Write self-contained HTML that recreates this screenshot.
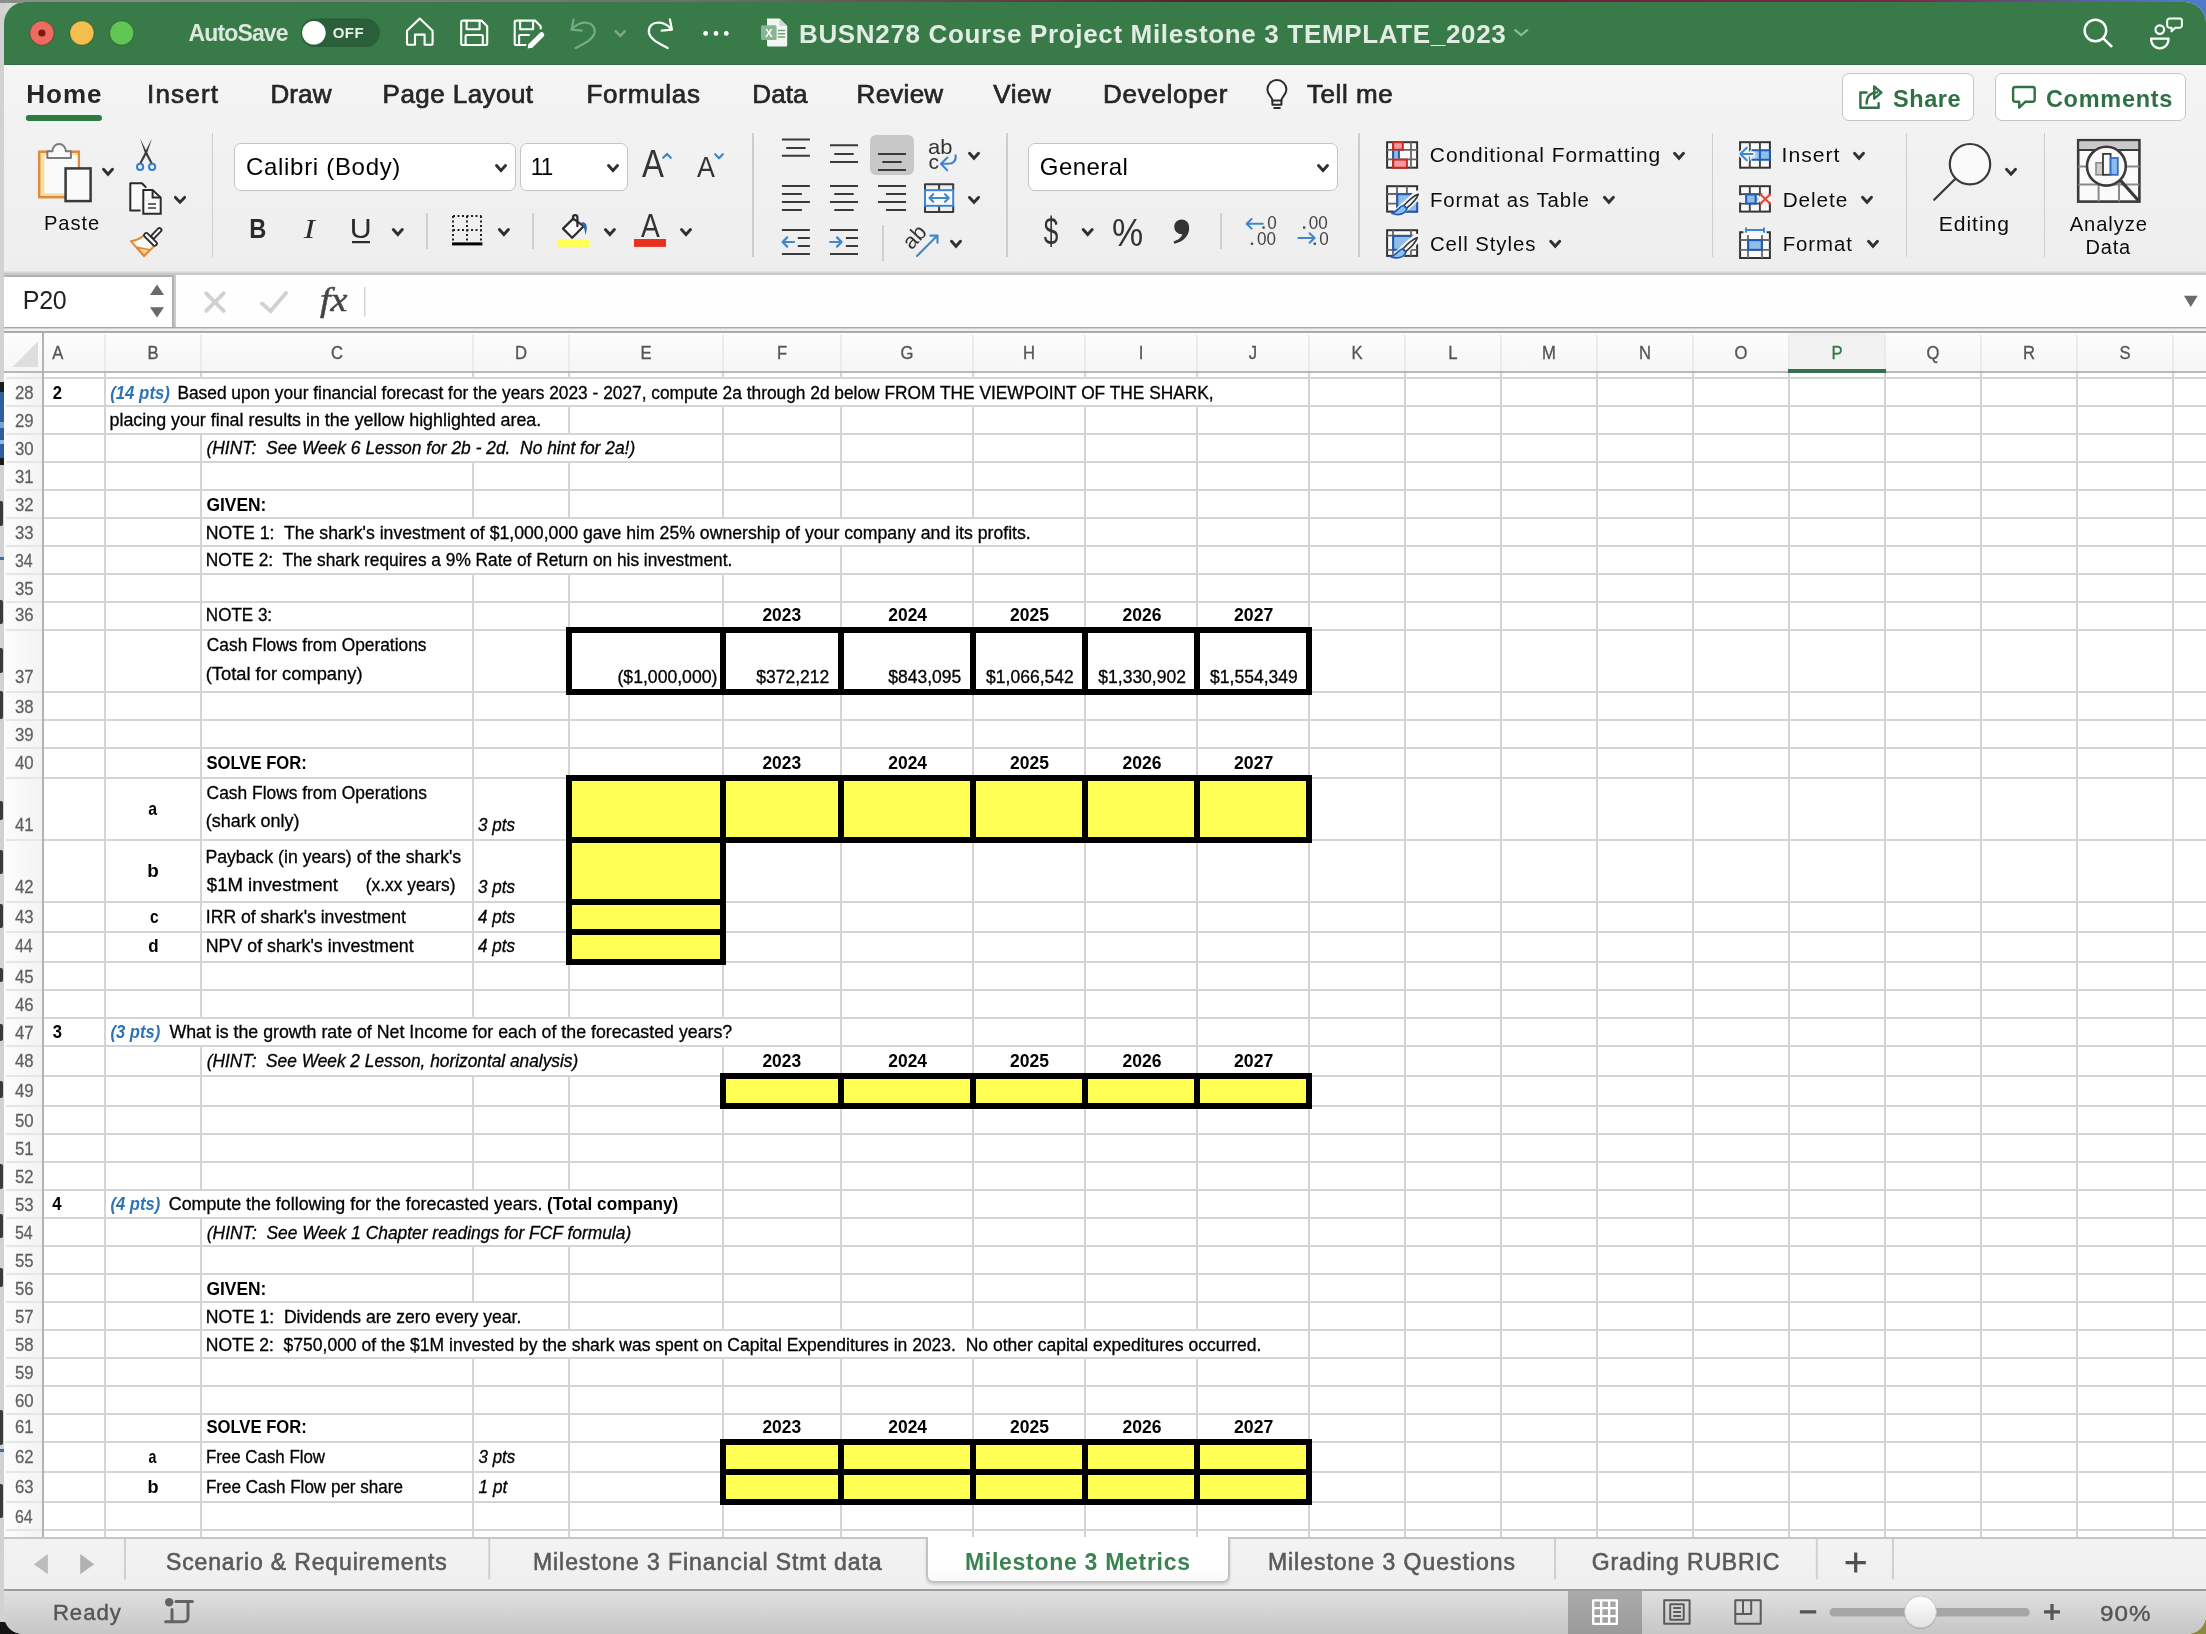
<!DOCTYPE html><html><head><meta charset="utf-8"><title>BUSN278 Course Project Milestone 3 TEMPLATE_2023</title>
<style>
html,body{margin:0;padding:0}
body{width:2206px;height:1634px;position:relative;overflow:hidden;background:#d6d6d6;font-family:"Liberation Sans",sans-serif}
.a{position:absolute}
#win{position:absolute;left:4px;top:2px;width:2202px;height:1632px;border-radius:21px 21px 19px 19px;overflow:hidden;background:#fff}
svg{position:absolute;left:0;top:0;will-change:transform}
text{white-space:pre}
</style></head><body>
<div class="a" style="left:0;top:0;width:2206px;height:3px;background:linear-gradient(90deg,#8a8f8c 0,#6b6f6e 700px,#5a2030 1200px,#7a2848 1900px,#4f79c9 2180px)"></div>
<div class="a" style="left:0;top:3px;width:6px;height:1631px;background:#d2d2d2"></div>
<div class="a" style="left:0;top:382px;width:5px;height:83px;background:linear-gradient(#1c1c1c 0,#1c1c1c 10px,#2c5f9c 10px,#2c5f9c 40px,#7fa3cf 40px,#7fa3cf 46px,#2c5f9c 46px,#2c5f9c 58px,#9ab6da 58px,#9ab6da 62px,#2c5f9c 62px,#2c5f9c 76px,#1c1c1c 76px)"></div>
<div class="a" style="left:0;top:557px;width:5px;height:3px;background:#3a6db0"></div>
<div class="a" style="left:0;top:1449px;width:5px;height:3px;background:#3a6db0"></div>
<div class="a" style="left:0;top:501px;width:3px;height:25px;background:#3a3a3a;border-radius:0 2px 2px 0"></div>
<div class="a" style="left:0;top:600px;width:3px;height:24px;background:#3a3a3a;border-radius:0 2px 2px 0"></div>
<div class="a" style="left:0;top:648px;width:3px;height:25px;background:#3a3a3a;border-radius:0 2px 2px 0"></div>
<div class="a" style="left:0;top:691px;width:3px;height:28px;background:#3a3a3a;border-radius:0 2px 2px 0"></div>
<div class="a" style="left:0;top:801px;width:3px;height:19px;background:#3a3a3a;border-radius:0 2px 2px 0"></div>
<div class="a" style="left:0;top:850px;width:3px;height:24px;background:#3a3a3a;border-radius:0 2px 2px 0"></div>
<div class="a" style="left:0;top:904px;width:3px;height:24px;background:#3a3a3a;border-radius:0 2px 2px 0"></div>
<div class="a" style="left:0;top:968px;width:3px;height:14px;background:#3a3a3a;border-radius:0 2px 2px 0"></div>
<div class="a" style="left:0;top:1024px;width:3px;height:17px;background:#3a3a3a;border-radius:0 2px 2px 0"></div>
<div class="a" style="left:0;top:1081px;width:3px;height:17px;background:#3a3a3a;border-radius:0 2px 2px 0"></div>
<div class="a" style="left:0;top:1164px;width:3px;height:25px;background:#3a3a3a;border-radius:0 2px 2px 0"></div>
<div class="a" style="left:0;top:1214px;width:3px;height:24px;background:#3a3a3a;border-radius:0 2px 2px 0"></div>
<div class="a" style="left:0;top:1268px;width:3px;height:19px;background:#3a3a3a;border-radius:0 2px 2px 0"></div>
<div class="a" style="left:0;top:1410px;width:3px;height:35px;background:#3a3a3a;border-radius:0 2px 2px 0"></div>
<div class="a" style="left:0;top:1484px;width:3px;height:34px;background:#3a3a3a;border-radius:0 2px 2px 0"></div>
<div class="a" style="left:0;top:1622px;width:26px;height:12px;background:#141414"></div>
<div class="a" style="left:2176px;top:1604px;width:30px;height:30px;background:#8a8a3c"></div>
<div class="a" style="left:2176px;top:0;width:30px;height:30px;background:#4f79c9"></div>
<div id="win">
<div class="a" style="left:0px;top:0px;width:2202px;height:63px;background:linear-gradient(#387b49 0,#387b49 61.5px,#2f7040 62.5px,#2f7040 63px)"></div>
<div class="a" style="left:0px;top:63px;width:2202px;height:207px;background:linear-gradient(#fff 0,#fff 1px,#f7f7f7 1.5px,#f4f4f4 12px,#f2f2f2 60px,#eeeeee 207px)"></div>
<div class="a" style="left:0px;top:269px;width:2202px;height:4px;background:linear-gradient(#eaeaea,#c9c9c9 60%,#c6c6c6)"></div>
<div class="a" style="left:0px;top:273px;width:2202px;height:52px;background:#fefefe"></div>
<div class="a" style="left:0px;top:273px;width:168px;height:50px;background:#fff;border-top:2px solid #b2b2b2;border-right:2px solid #b2b2b2;box-sizing:content-box"></div>
<div class="a" style="left:170px;top:273px;width:2px;height:52px;background:#cbcbcb"></div>
<div class="a" style="left:0px;top:325px;width:2202px;height:6px;background:linear-gradient(#a6a6a6 0,#a9a9a9 1.3px,#e4e4e4 1.6px,#fbfbfb 3px,#dcdcdc 4.2px,#ababab 4.5px,#ababab 5.7px,#e8e8e8 6px)"></div>
<div class="a" style="left:0px;top:331px;width:2202px;height:38px;background:linear-gradient(#fdfdfd,#f6f6f6)"></div>
<div class="a" style="left:1785px;top:331px;width:96px;height:38px;background:#f2f2f2"></div>
<div class="a" style="left:1784px;top:367px;width:98px;height:4px;background:#35714a"></div>
<div class="a" style="left:0px;top:369px;width:2202px;height:2px;background:#b8b8b8"></div>
<div class="a" style="left:1784px;top:367px;width:98px;height:4px;background:#35714a"></div>
<div class="a" style="left:0px;top:371px;width:39px;height:1164px;background:linear-gradient(90deg,#fdfdfd,#f3f3f3)"></div>
<div class="a" style="left:0px;top:1535px;width:2202px;height:53px;background:linear-gradient(#c6c6c6 0,#c6c6c6 2px,#f3f3f3 2px,#efefef 53px)"></div>
<div class="a" style="left:0px;top:1587px;width:2202px;height:2px;background:#9c9c9c"></div>
<div class="a" style="left:0px;top:1589px;width:2202px;height:43px;background:linear-gradient(#e0e0e0,#c6c6c6)"></div>
<div class="a" style="left:1564px;top:1589px;width:74px;height:43px;background:linear-gradient(#ababab,#9a9a9a)"></div>
<div class="a" style="left:922px;top:1535px;width:304px;height:46px;background:linear-gradient(#fff 60%,#fafafa);border:2px solid #c2c2c2;border-top:none;box-sizing:border-box;border-radius:0 0 7px 7px;box-shadow:0 2px 3px rgba(0,0,0,.12)"></div>
<div class="a" style="left:230px;top:141px;width:282px;height:48.4px;background:#fff;border:1.6px solid #c4c4c4;border-radius:7px;box-sizing:border-box"></div>
<div class="a" style="left:516px;top:141px;width:108px;height:48.4px;background:#fff;border:1.6px solid #c4c4c4;border-radius:7px;box-sizing:border-box"></div>
<div class="a" style="left:1024px;top:141px;width:310px;height:48.4px;background:#fff;border:1.6px solid #c4c4c4;border-radius:7px;box-sizing:border-box"></div>
<div class="a" style="left:1837.5px;top:71px;width:132px;height:47.5px;background:#fff;border:1.6px solid #c4c4c4;border-radius:7px;box-sizing:border-box"></div>
<div class="a" style="left:1990.5px;top:71px;width:191px;height:47.5px;background:#fff;border:1.6px solid #c4c4c4;border-radius:7px;box-sizing:border-box"></div>
<div class="a" style="left:866px;top:133px;width:44px;height:40px;background:#c8c8c8;border-radius:6px"></div>
<div class="a" style="left:207.75px;top:131px;width:1.5px;height:124px;background:#cdcdcd"></div>
<div class="a" style="left:748.25px;top:131px;width:1.5px;height:124px;background:#cdcdcd"></div>
<div class="a" style="left:1002.25px;top:131px;width:1.5px;height:124px;background:#cdcdcd"></div>
<div class="a" style="left:1354.25px;top:131px;width:1.5px;height:124px;background:#cdcdcd"></div>
<div class="a" style="left:1707.75px;top:131px;width:1.5px;height:124px;background:#cdcdcd"></div>
<div class="a" style="left:1901.75px;top:131px;width:1.5px;height:124px;background:#cdcdcd"></div>
<div class="a" style="left:2039.75px;top:131px;width:1.5px;height:124px;background:#cdcdcd"></div>
<div class="a" style="left:422.05px;top:211px;width:1.5px;height:36px;background:#d0d0d0"></div>
<div class="a" style="left:528.25px;top:211px;width:1.5px;height:36px;background:#d0d0d0"></div>
<div class="a" style="left:878.45px;top:223px;width:1.5px;height:36px;background:#d0d0d0"></div>
<div class="a" style="left:1216.25px;top:211px;width:1.5px;height:36px;background:#d0d0d0"></div>
</div>
<svg width="2206" height="1634" viewBox="0 0 2206 1634">
<path d="M105 373V1537M201 373V1537M473 373V1537M569 373V1537M723 373V1537M841 373V1537M973 373V1537M1085 373V1537M1197 373V1537M1309 373V1537M1405 373V1537M1501 373V1537M1597 373V1537M1693 373V1537M1789 373V1537M1885 373V1537M1981 373V1537M2077 373V1537M2173 373V1537M44 378H2206M44 406H2206M44 434H2206M44 462H2206M44 490H2206M44 518H2206M44 546H2206M44 574H2206M44 602H2206M44 630H2206M44 692H2206M44 720H2206M44 748H2206M44 778H2206M44 840H2206M44 902H2206M44 932H2206M44 962H2206M44 990H2206M44 1018H2206M44 1046H2206M44 1076H2206M44 1106H2206M44 1134H2206M44 1162H2206M44 1190H2206M44 1218H2206M44 1246H2206M44 1274H2206M44 1302H2206M44 1330H2206M44 1358H2206M44 1386H2206M44 1414H2206M44 1442H2206M44 1472H2206M44 1502H2206M44 1530H2206" stroke="#d4d4d4" stroke-width="2" fill="none" shape-rendering="crispEdges"/>
<path d="M6 378H42M6 406H42M6 434H42M6 462H42M6 490H42M6 518H42M6 546H42M6 574H42M6 602H42M6 630H42M6 692H42M6 720H42M6 748H42M6 778H42M6 840H42M6 902H42M6 932H42M6 962H42M6 990H42M6 1018H42M6 1046H42M6 1076H42M6 1106H42M6 1134H42M6 1162H42M6 1190H42M6 1218H42M6 1246H42M6 1274H42M6 1302H42M6 1330H42M6 1358H42M6 1386H42M6 1414H42M6 1442H42M6 1472H42M6 1502H42M6 1530H42" stroke="#e6e6e6" stroke-width="2" fill="none" shape-rendering="crispEdges"/>
<path d="M43 333V1537" stroke="#b3b3b3" stroke-width="2" shape-rendering="crispEdges"/>
<path d="M105 335V371M201 335V371M473 335V371M569 335V371M723 335V371M841 335V371M973 335V371M1085 335V371M1197 335V371M1309 335V371M1405 335V371M1501 335V371M1597 335V371M1693 335V371M1789 335V371M1885 335V371M1981 335V371M2077 335V371M2173 335V371" stroke="#ebebeb" stroke-width="2" shape-rendering="crispEdges"/>
<rect x="1788" y="369" width="98" height="4" fill="#35714a"/>
<path d="M12.5 367H38V341.5Z" fill="#dedede"/>
<rect x="106" y="379" width="1202" height="26" fill="#fff"/>
<rect x="106" y="407" width="462" height="26" fill="#fff"/>
<rect x="202" y="435" width="520" height="26" fill="#fff"/>
<rect x="202" y="519" width="882" height="26" fill="#fff"/>
<rect x="202" y="547" width="638" height="26" fill="#fff"/>
<rect x="106" y="1019" width="734" height="26" fill="#fff"/>
<rect x="202" y="1047" width="520" height="28" fill="#fff"/>
<rect x="106" y="1191" width="616" height="26" fill="#fff"/>
<rect x="202" y="1219" width="520" height="26" fill="#fff"/>
<rect x="202" y="1303" width="366" height="26" fill="#fff"/>
<rect x="202" y="1331" width="1106" height="26" fill="#fff"/>
<rect x="569" y="630" width="740" height="62" fill="#fff"/>
<path d="M569 627V695M723 627V695M841 627V695M973 627V695M1085 627V695M1197 627V695M1309 627V695M566 630H1312M566 692H1312" stroke="#000" stroke-width="6" fill="none" shape-rendering="crispEdges"/>
<rect x="569" y="778" width="740" height="62" fill="#ffff54"/>
<path d="M569 775V843M723 775V843M841 775V843M973 775V843M1085 775V843M1197 775V843M1309 775V843M566 778H1312M566 840H1312" stroke="#000" stroke-width="6" fill="none" shape-rendering="crispEdges"/>
<rect x="569" y="840" width="154" height="122" fill="#ffff54"/>
<path d="M569 837V965M723 837V965M566 840H726M566 902H726M566 932H726M566 962H726" stroke="#000" stroke-width="6" fill="none" shape-rendering="crispEdges"/>
<rect x="723" y="1076" width="586" height="30" fill="#ffff54"/>
<path d="M723 1073V1109M841 1073V1109M973 1073V1109M1085 1073V1109M1197 1073V1109M1309 1073V1109M720 1076H1312M720 1106H1312" stroke="#000" stroke-width="6" fill="none" shape-rendering="crispEdges"/>
<rect x="723" y="1442" width="586" height="60" fill="#ffff54"/>
<path d="M723 1439V1505M841 1439V1505M973 1439V1505M1085 1439V1505M1197 1439V1505M1309 1439V1505M720 1442H1312M720 1472H1312M720 1502H1312" stroke="#000" stroke-width="6" fill="none" shape-rendering="crispEdges"/>
<circle cx="41.9" cy="33" r="12" fill="#ed6b5f" stroke="rgba(0,0,0,.22)" stroke-width="1.2"/>
<circle cx="41.9" cy="33" r="3.6" fill="#7c1a10" stroke="none" stroke-width="0"/>
<circle cx="81.9" cy="33" r="12" fill="#f5bf4f" stroke="rgba(0,0,0,.22)" stroke-width="1.2"/>
<circle cx="121.7" cy="33" r="12" fill="#62c655" stroke="rgba(0,0,0,.22)" stroke-width="1.2"/>
<rect x="300.8" y="18.6" width="79.1" height="28.5" rx="14.25" fill="#2b5f3a" stroke="none" stroke-width="0" />
<circle cx="313.9" cy="32.8" r="11.8" fill="#fff" stroke="none" stroke-width="0"/>
<path d="M407 30.7L419.8 18.6L432.6 30.7V43.2a1.6 1.6 0 0 1-1.6 1.6H424.6V34.6H415V44.8H408.6a1.6 1.6 0 0 1-1.6-1.6Z" stroke="#fff" stroke-width="2.1" fill="none" stroke-linecap="round" stroke-linejoin="round" />
<path d="M461.2 22.2a1.6 1.6 0 0 1 1.6-1.6H481.5L487.2 26.3V43.4a1.6 1.6 0 0 1-1.6 1.6H462.8a1.6 1.6 0 0 1-1.6-1.6Z" stroke="#fff" stroke-width="2.1" fill="none" stroke-linecap="round" stroke-linejoin="round" />
<path d="M466.6 20.8V29.2H479.6V20.8M465.6 45V36a1 1 0 0 1 1-1H481.8a1 1 0 0 1 1 1V45" stroke="#fff" stroke-width="2.1" fill="none" stroke-linecap="round" stroke-linejoin="round" />
<path d="M527 45H516.3a1.6 1.6 0 0 1-1.6-1.6V22.2a1.6 1.6 0 0 1 1.6-1.6H535L540.7 26.3V28.5" stroke="#fff" stroke-width="2.1" fill="none" stroke-linecap="round" stroke-linejoin="round" />
<path d="M520.1 20.8V29.2H533.1V20.8M519.1 45V36a1 1 0 0 1 1-1H529" stroke="#fff" stroke-width="2.1" fill="none" stroke-linecap="round" stroke-linejoin="round" />
<path d="M530.6 45.6L542 34.2" stroke="#387c4a" stroke-width="9" stroke-linecap="round"/>
<path d="M531.2 45.2L541.6 34.8" stroke="#fff" stroke-width="5.2" stroke-linecap="round"/>
<path d="M527.6 48.4L528.6 43.6L532.6 47.4Z" fill="#fff" />
<path d="M573.6 19.4L571.6 29.6L581.8 30.6" stroke="#7aa987" stroke-width="2.2" fill="none" stroke-linecap="round" stroke-linejoin="round" />
<path d="M572.2 29.2C579 19.5 596.5 20.5 594.5 33C593.2 39.5 584 43.5 575.8 48" stroke="#7aa987" stroke-width="2.2" fill="none" stroke-linecap="round" stroke-linejoin="round" />
<path d="M615.6 31.1L620.2 35.9L624.8000000000001 31.1" stroke="#7aa987" stroke-width="2.4" fill="none" stroke-linecap="round" stroke-linejoin="miter"/>
<path d="M669.9 19.4L671.9 29.6L661.7 30.6" stroke="#fff" stroke-width="2.2" fill="none" stroke-linecap="round" stroke-linejoin="round" />
<path d="M671.3 29.2C664.5 19.5 647 20.5 649 33C650.3 39.5 659.5 43.5 667.7 48" stroke="#fff" stroke-width="2.2" fill="none" stroke-linecap="round" stroke-linejoin="round" />
<circle cx="705.6" cy="33.4" r="2.4" fill="#fff" stroke="none" stroke-width="0"/>
<circle cx="716" cy="33.4" r="2.4" fill="#fff" stroke="none" stroke-width="0"/>
<circle cx="726.3" cy="33.4" r="2.4" fill="#fff" stroke="none" stroke-width="0"/>
<path d="M767 18.4H779.5L787.2 26V45a1.6 1.6 0 0 1-1.6 1.6H768.6a1.6 1.6 0 0 1-1.6-1.6Z" fill="#f2f6f3" />
<path d="M779.5 18.4L787.2 26H779.5Z" fill="#c5d9ca" />
<rect x="761" y="25.3" width="15.6" height="14.6" rx="1.5" fill="#8ab594" stroke="none" stroke-width="0" />
<text x="768.8" y="36.6" font-size="11" font-weight="bold" fill="#fff" text-anchor="middle">X</text>
<path d="M778.5 30.5H784.5M778.5 33.8H784.5M778.5 37H784.5" stroke="#6ea37b" stroke-width="1.6" fill="none" stroke-linecap="round" stroke-linejoin="round" />
<path d="M1515.2 30.200000000000003L1521.2 35.0L1527.2 30.200000000000003" stroke="#8fba9b" stroke-width="2.2" fill="none" stroke-linecap="round" stroke-linejoin="miter"/>
<circle cx="2095.4" cy="30.5" r="10.8" fill="none" stroke="#fff" stroke-width="2.4"/>
<path d="M2103.2 38.4L2111.4 46.2" stroke="#fff" stroke-width="2.6" fill="none" stroke-linecap="round" stroke-linejoin="round" />
<circle cx="2159.8" cy="29.6" r="4.3" fill="none" stroke="#fff" stroke-width="2.2"/>
<path d="M2151 38.6H2168.6C2168.6 51.5 2151 51.5 2151 38.6Z" stroke="#fff" stroke-width="2.2" fill="none" stroke-linecap="round" stroke-linejoin="round" />
<path d="M2169.5 18.6H2179.6a2.3 2.3 0 0 1 2.3 2.3V25.5a2.3 2.3 0 0 1-2.3 2.3H2175.2L2171.6 31.4V27.8H2169.5a2.3 2.3 0 0 1-2.3-2.3V20.9a2.3 2.3 0 0 1 2.3-2.3Z" stroke="#fff" stroke-width="2" fill="none" stroke-linecap="round" stroke-linejoin="round" />
<rect x="25.8" y="115" width="76.2" height="6" rx="3" fill="#2e7a45" stroke="none" stroke-width="0" />
<path d="M1272.4 100.4C1272.4 96.6 1267.4 95.2 1267.4 89.6A9.5 9.5 0 0 1 1286.4 89.6C1286.4 95.2 1281.4 96.6 1281.4 100.4Z" stroke="#2b2b2b" stroke-width="2" fill="#fafafa" stroke-linecap="round" stroke-linejoin="round" />
<path d="M1272.4 100.4V104.8H1281.4V100.4M1274.2 107.9H1279.8" stroke="#2b2b2b" stroke-width="2" fill="none" stroke-linecap="round" stroke-linejoin="round" />
<path d="M1866.5 92.5H1860.4V107.8H1878.6V103.2" stroke="#2f7045" stroke-width="2.4" fill="none" stroke-linecap="round" stroke-linejoin="round" />
<path d="M1866.6 103.5C1866.6 96 1871 92.6 1877.2 92.4M1874.2 86.5L1881.4 92.6L1874.2 98.6V86.5Z" stroke="#2f7045" stroke-width="2.4" fill="none" stroke-linecap="round" stroke-linejoin="round" />
<path d="M2015.3 87H2032.5a2.2 2.2 0 0 1 2.2 2.2V99.6a2.2 2.2 0 0 1-2.2 2.2H2025.2L2019.2 107.6V101.8H2015.3a2.2 2.2 0 0 1-2.2-2.2V89.2a2.2 2.2 0 0 1 2.2-2.2Z" stroke="#2f7045" stroke-width="2.4" fill="none" stroke-linecap="round" stroke-linejoin="round" />
<rect x="39.2" y="151.7" width="39.6" height="45.5" rx="0" fill="#f9dea6" stroke="#e08a3c" stroke-width="2.5" />
<rect x="44.6" y="155" width="33" height="38.2" rx="0" fill="#fafafa" stroke="none" stroke-width="0" />
<path d="M47.3 158V151.2H52.4a6.7 7.2 0 0 1 13.4 0H70.9V158Z" stroke="#7a7a7a" stroke-width="2" fill="#fafafa" stroke-linecap="round" stroke-linejoin="round" />
<rect x="65.6" y="168.4" width="25" height="32.7" rx="0" fill="#fafafa" stroke="#3a3a3a" stroke-width="2.5" />
<path d="M103.5 169.35000000000002L108 174.25L112.5 169.35000000000002" stroke="#303030" stroke-width="2.95" fill="none" stroke-linecap="round" stroke-linejoin="miter"/>
<path d="M140 138.6L147.2 152.4L152.9 163.4L151 164.2L145 153.2Z" fill="#3a3a3a" />
<path d="M152 138.6L144.8 152.4L139.1 163.4L141 164.2L147 153.2Z" fill="#3a3a3a" />
<circle cx="140.1" cy="166.9" r="3.1" fill="none" stroke="#2f80cf" stroke-width="2"/>
<circle cx="152.1" cy="166.9" r="3.1" fill="none" stroke="#2f80cf" stroke-width="2"/>
<path d="M139.8 210.6H130.3V183.3H141.9L145.6 187" stroke="#2b2b2b" stroke-width="2" fill="#fafafa" stroke-linecap="round" stroke-linejoin="round" />
<path d="M143.3 190.1H152.6L160.7 197.6V213.7H143.3Z" stroke="#2b2b2b" stroke-width="2" fill="#fafafa" stroke-linejoin="miter"/>
<path d="M152.6 190.1V197.6H160.7" stroke="#2b2b2b" stroke-width="2" fill="none"/>
<path d="M148.1 204H156M148.1 208.1H156" stroke="#666" stroke-width="2" fill="none"/>
<path d="M175.4 197.4L180 202.20000000000002L184.6 197.4" stroke="#2f2f2f" stroke-width="2.9" fill="none" stroke-linecap="round" stroke-linejoin="miter"/>
<path d="M143.8 235.6C139.5 239 135 240.6 130.9 241.2L144 256.2L154.2 246Z" stroke="#e08a3c" stroke-width="2" fill="#fafafa" stroke-linecap="round" stroke-linejoin="round" />
<path d="M137 247.4L149.8 249.8L144 255.4Z" stroke="#e08a3c" stroke-width="1.6" fill="#f8dc98" stroke-linecap="round" stroke-linejoin="round" />
<rect x="1" y="-2" width="12.6" height="4" rx="2" fill="#fafafa" stroke="#2b2b2b" stroke-width="1.9" transform="translate(151.4 238.4) rotate(-46)"/>
<rect x="-8" y="-2.1" width="16" height="4.2" rx="1.6" fill="#fafafa" stroke="#2b2b2b" stroke-width="1.9" transform="translate(150.5 239.4) rotate(45)"/>
<path d="M496.5 165.55L501 170.45L505.5 165.55" stroke="#303030" stroke-width="2.95" fill="none" stroke-linecap="round" stroke-linejoin="miter"/>
<path d="M608.5 165.55L613 170.45L617.5 165.55" stroke="#303030" stroke-width="2.95" fill="none" stroke-linecap="round" stroke-linejoin="miter"/>
<path d="M663.2 157.8L667 153.9L670.8 157.8" stroke="#3f86cc" stroke-width="2.2" fill="none" stroke-linecap="round" stroke-linejoin="round" />
<path d="M715.2 154.2L719 158.2L722.8 154.2" stroke="#3f86cc" stroke-width="2.2" fill="none" stroke-linecap="round" stroke-linejoin="round" />
<rect x="352" y="241" width="18" height="2.2" rx="0" fill="#2b2b2b" stroke="none" stroke-width="0" />
<path d="M393.3 229.55L397.8 234.45L402.3 229.55" stroke="#303030" stroke-width="2.95" fill="none" stroke-linecap="round" stroke-linejoin="miter"/>
<path d="M453 216H481.5M453 230H481.5M453 216V243M467 216V243M481 216V243" stroke="#222" stroke-width="2" stroke-dasharray="2 2.5" fill="none"/>
<rect x="452" y="242.4" width="30.4" height="3" rx="0" fill="#000" stroke="none" stroke-width="0" />
<path d="M499.4 229.55L503.9 234.45L508.4 229.55" stroke="#303030" stroke-width="2.95" fill="none" stroke-linecap="round" stroke-linejoin="miter"/>
<path d="M573.2 218.6L583.6 226.2L572.2 237.8L563 228.6Z" stroke="#2b2b2b" stroke-width="2.2" fill="#fafafa" stroke-linecap="round" stroke-linejoin="round" />
<path d="M573 219.6V217.4a2.2 2.2 0 0 1 4.4 0V226.2" stroke="#2b2b2b" stroke-width="2.2" fill="none" stroke-linecap="round" stroke-linejoin="round" />
<path d="M580.4 223.2C582.6 221.2 586.6 222.4 586.8 227C586.9 230 586 232.6 585.5 235.2C584.9 231.6 584.6 229.6 584 228C583.2 225.8 582 224.4 580.4 223.2Z" fill="#2a63b5" />
<rect x="558" y="239" width="32.1" height="7.9" rx="0" fill="#ffff54" stroke="none" stroke-width="0" />
<path d="M605.4 229.55L609.9 234.45L614.4 229.55" stroke="#303030" stroke-width="2.95" fill="none" stroke-linecap="round" stroke-linejoin="miter"/>
<rect x="634" y="239" width="32" height="7.9" rx="0" fill="#e8311f" stroke="none" stroke-width="0" />
<path d="M681.5 229.55L686 234.45L690.5 229.55" stroke="#303030" stroke-width="2.95" fill="none" stroke-linecap="round" stroke-linejoin="miter"/>
<path d="M781.9 139.6H809.9M786.2 148H805.6M781.9 155.8H809.9" stroke="#3a3a3a" stroke-width="2" fill="none"/>
<path d="M830 145.3H858M834.3 153.9H853.7M830 161.9H858" stroke="#3a3a3a" stroke-width="2" fill="none"/>
<path d="M878 153.9H906M882.3 161.9H901.7M878 169.9H906" stroke="#3a3a3a" stroke-width="2" fill="none"/>
<path d="M781.9 186H809.9M781.9 194H801.9M781.9 202H809.9M781.9 210H801.9" stroke="#3a3a3a" stroke-width="2" fill="none"/>
<path d="M830 186H858M834.3 194H853.7M830 202H858M834.3 210H853.7" stroke="#3a3a3a" stroke-width="2" fill="none"/>
<path d="M878 186H906M886 194H906M878 202H906M886 210H906" stroke="#3a3a3a" stroke-width="2" fill="none"/>
<path d="M781.9 229.9H809.9M797.8 238H809.9M797.8 246H809.9M781.9 254H809.9" stroke="#3a3a3a" stroke-width="2" fill="none"/>
<path d="M830 229.9H858M845.9 238H858M845.9 246H858M830 254H858" stroke="#3a3a3a" stroke-width="2" fill="none"/>
<path d="M794 242H783M787.2 237.4L782.6 242L787.2 246.6" stroke="#3f86cc" stroke-width="2.2" fill="none" stroke-linecap="round" stroke-linejoin="round" />
<path d="M830.2 242H841.2M837 237.4L841.6 242L837 246.6" stroke="#3f86cc" stroke-width="2.2" fill="none" stroke-linecap="round" stroke-linejoin="round" />
<text x="0" y="0" font-size="20.5" fill="#333" transform="matrix(1.07 0 0 1 928.1 154)">ab</text>
<text x="0" y="0" font-size="20.5" fill="#333" transform="matrix(1.03 0 0 1 928.5 168.5)">c</text>
<path d="M955.6 155.4C956.4 160.6 953.4 163.7 948.4 163.7H941.4M947.5 157.5L940.9 163.8L947.2 170.3" stroke="#3f86cc" stroke-width="2.1" fill="none" stroke-linecap="round" stroke-linejoin="round" />
<path d="M969.5 153.35000000000002L974 158.25L978.5 153.35000000000002" stroke="#303030" stroke-width="2.95" fill="none" stroke-linecap="round" stroke-linejoin="miter"/>
<path d="M925 190V184.2H953.2V190M925 206V211.9H953.2V206M939.1 184.2V190M939.1 206V211.9" stroke="#3a3a3a" stroke-width="2" fill="none" stroke-linecap="round" stroke-linejoin="round" />
<rect x="925" y="190.2" width="28.2" height="15.6" rx="0" fill="#fafafa" stroke="#3f86cc" stroke-width="2" />
<path d="M929.6 198H948.6M933.2 194.2L929.4 198L933.2 201.8M945 194.2L948.8 198L945 201.8" stroke="#3f86cc" stroke-width="2.1" fill="none" stroke-linecap="round" stroke-linejoin="round" />
<path d="M969.5 197.45000000000002L974 202.35L978.5 197.45000000000002" stroke="#303030" stroke-width="2.95" fill="none" stroke-linecap="round" stroke-linejoin="miter"/>
<text x="0" y="0" font-size="21.5" fill="#333" transform="translate(911.6 250.4) rotate(-47)">ab</text>
<path d="M917 256L937.4 235.6M930.4 235.6H937.5V242.7" stroke="#3f86cc" stroke-width="2.1" fill="none" stroke-linecap="round" stroke-linejoin="round" />
<path d="M951.5 241.35000000000002L956 246.25L960.5 241.35000000000002" stroke="#303030" stroke-width="2.95" fill="none" stroke-linecap="round" stroke-linejoin="miter"/>
<path d="M1318.5 165.55L1323 170.45L1327.5 165.55" stroke="#303030" stroke-width="2.95" fill="none" stroke-linecap="round" stroke-linejoin="miter"/>
<path d="M1083.2 229.55L1087.7 234.45L1092.2 229.55" stroke="#303030" stroke-width="2.95" fill="none" stroke-linecap="round" stroke-linejoin="miter"/>
<circle cx="1181.6" cy="226.8" r="7.4" fill="#333" stroke="none" stroke-width="0"/>
<path d="M1188.8 225.2C1190.6 233.5 1185.5 241 1174.4 243.8L1173.6 241.6C1180.6 239.2 1183.6 235 1182.4 230Z" fill="#333" />
<path d="M1262.8 223.8H1247M1251.6 219L1246.6 223.8L1251.6 228.6" stroke="#3f86cc" stroke-width="2" fill="none" stroke-linecap="round" stroke-linejoin="round" />
<rect x="1262.4" y="226.4" width="2.3" height="2.3" rx="0" fill="#444" stroke="none" stroke-width="0" />
<text x="0" y="0" font-size="18.6" fill="#444" transform="matrix(.92 0 0 1 1267.2 229.0)">0</text>
<rect x="1250.8" y="242.6" width="2.3" height="2.3" rx="0" fill="#444" stroke="none" stroke-width="0" />
<text x="0" y="0" font-size="18.6" fill="#444" transform="matrix(.92 0 0 1 1256.9 245.20000000000002)">00</text>
<rect x="1303" y="226.4" width="2.3" height="2.3" rx="0" fill="#444" stroke="none" stroke-width="0" />
<text x="0" y="0" font-size="18.6" fill="#444" transform="matrix(.92 0 0 1 1308.7 229.0)">00</text>
<path d="M1298.4 238H1314.2M1309.6 233.2L1314.6 238L1309.6 242.8" stroke="#3f86cc" stroke-width="2" fill="none" stroke-linecap="round" stroke-linejoin="round" />
<rect x="1313.6" y="242.6" width="2.3" height="2.3" rx="0" fill="#444" stroke="none" stroke-width="0" />
<text x="0" y="0" font-size="18.6" fill="#444" transform="matrix(.92 0 0 1 1319.2 245.20000000000002)">0</text>
<rect x="1387.1" y="142.2" width="30" height="25.5" rx="0" fill="#fafafa" stroke="#333" stroke-width="2" />
<path d="M1393 142.2V167.7M1411 142.2V167.7M1387.1 149.8H1417.1M1387.1 159.3H1417.1" stroke="#666" stroke-width="1.8" fill="none"/>
<rect x="1393.2" y="142.2" width="9.6" height="7.6" rx="0" fill="#f19aa1" stroke="#c92a1b" stroke-width="2" />
<rect x="1393.2" y="150.8" width="5.7" height="7.6" rx="0" fill="#90bdea" stroke="none" stroke-width="0" />
<path d="M1393.2 150.8V158.4M1398.9 150.8V158.4" stroke="#1f5db4" stroke-width="2" fill="none"/>
<rect x="1393.2" y="159.6" width="13.7" height="8.1" rx="0" fill="#f19aa1" stroke="#c92a1b" stroke-width="2" />
<path d="M1674.5 153.35000000000002L1679 158.25L1683.5 153.35000000000002" stroke="#303030" stroke-width="2.95" fill="none" stroke-linecap="round" stroke-linejoin="miter"/>
<rect x="1387.1" y="186.2" width="30" height="25.4" rx="0" fill="#fafafa" stroke="#333" stroke-width="2" />
<path d="M1397 186.2V211.6M1406.9 186.2V211.6M1387.1 194H1417.1M1387.1 203.6H1417.1" stroke="#666" stroke-width="1.8" fill="none"/>
<rect x="1397.3" y="194.2" width="19.8" height="17.4" rx="0" fill="#90bdea" stroke="#1f5db4" stroke-width="2" />
<g transform="translate(0 0)">
<path d="M1417.5 195.2L1399 212" stroke="#f4f4f4" stroke-width="9.5" fill="none" stroke-linecap="round" stroke-linejoin="round" />
<path d="M1418.3 194.3C1414 195.4 1407.4 201.4 1404 205.6L1406.6 208.2C1410.8 204.8 1417 198.4 1418.3 194.3Z" stroke="#333" stroke-width="1.6" fill="#fafafa" stroke-linecap="round" stroke-linejoin="round" />
<path d="M1403.5 205.3L1406.9 208.7C1406 213.2 1399 216.4 1391.8 213.2C1396.6 212.6 1398.4 207 1403.5 205.3Z" stroke="#1f5db4" stroke-width="1.7" fill="#90bdea" stroke-linecap="round" stroke-linejoin="round" />
</g>
<path d="M1604.4 197.35000000000002L1608.9 202.25L1613.4 197.35000000000002" stroke="#303030" stroke-width="2.95" fill="none" stroke-linecap="round" stroke-linejoin="miter"/>
<rect x="1387.1" y="230.2" width="30" height="25.7" rx="0" fill="#fafafa" stroke="#333" stroke-width="2" />
<path d="M1393 230.2V255.9M1411 230.2V255.9M1387.1 235.6H1417.1M1387.1 249.8H1417.1" stroke="#666" stroke-width="1.8" fill="none"/>
<rect x="1393.2" y="236" width="17.8" height="13.8" rx="0" fill="#90bdea" stroke="#1f5db4" stroke-width="2" />
<g transform="translate(-1 43.4)">
<path d="M1417.5 195.2L1399 212" stroke="#f4f4f4" stroke-width="9.5" fill="none" stroke-linecap="round" stroke-linejoin="round" />
<path d="M1418.3 194.3C1414 195.4 1407.4 201.4 1404 205.6L1406.6 208.2C1410.8 204.8 1417 198.4 1418.3 194.3Z" stroke="#333" stroke-width="1.6" fill="#fafafa" stroke-linecap="round" stroke-linejoin="round" />
<path d="M1403.5 205.3L1406.9 208.7C1406 213.2 1399 216.4 1391.8 213.2C1396.6 212.6 1398.4 207 1403.5 205.3Z" stroke="#1f5db4" stroke-width="1.7" fill="#90bdea" stroke-linecap="round" stroke-linejoin="round" />
</g>
<path d="M1550.7 241.35000000000002L1555.2 246.25L1559.7 241.35000000000002" stroke="#303030" stroke-width="2.95" fill="none" stroke-linecap="round" stroke-linejoin="miter"/>
<defs><linearGradient id="ig" x1="0" y1="0" x2="1" y2="0"><stop offset="0" stop-color="#f7f7f7"/><stop offset=".42" stop-color="#90bdea"/></linearGradient></defs>
<rect x="1740.1" y="142.2" width="29.8" height="25.5" rx="0" fill="#fafafa" stroke="#333" stroke-width="2" />
<path d="M1749.8 142.2V167.7M1759.9 142.2V167.7" stroke="#444" stroke-width="1.9" fill="none"/>
<rect x="1749.8" y="150.2" width="20.1" height="9.6" rx="0" fill="url(#ig)" stroke="none" stroke-width="0" />
<path d="M1751.5 150.2H1769.9V159.8H1751.5M1759.9 150.2V159.8" stroke="#1f5db4" stroke-width="2" fill="none"/>
<path d="M1752.6 154H1740.4M1746.8 147.6L1740.2 154L1746.8 160.4" stroke="#f4f4f4" stroke-width="5" fill="none" stroke-linecap="round"/>
<path d="M1752.6 154H1740.6M1746.8 147.8L1740.4 154L1746.8 160.2" stroke="#3f88d0" stroke-width="2.1" fill="none" stroke-linecap="round" stroke-linejoin="round" />
<path d="M1854.5 153.35000000000002L1859 158.25L1863.5 153.35000000000002" stroke="#303030" stroke-width="2.95" fill="none" stroke-linecap="round" stroke-linejoin="miter"/>
<rect x="1740.1" y="186.2" width="29.8" height="25.4" rx="0" fill="#fafafa" stroke="#333" stroke-width="2" />
<path d="M1749.8 186.2V211.6M1759.9 186.2V211.6M1740.1 194.2H1769.9M1740.1 203.6H1769.9" stroke="#444" stroke-width="1.9" fill="none"/>
<rect x="1738" y="195.3" width="14" height="7.2" rx="0" fill="#f1f1f1" stroke="none" stroke-width="0" />
<path d="M1765.3 190.2L1774 198.9L1765.3 207.6L1756.6 198.9Z" fill="#f2f2f2" />
<path d="M1745.3 194.4H1755.6L1758.6 198.9L1755.6 203.4H1745.3Z" fill="#90bdea" />
<path d="M1746.2 194.4H1755.6V203.4H1746.2Z" stroke="#1f5db4" stroke-width="2" fill="none"/>
<path d="M1760.6 194.4L1770 203.6M1770 194.4L1760.6 203.6" stroke="#e0463b" stroke-width="2.1" fill="none" stroke-linecap="round" stroke-linejoin="round" />
<path d="M1862.5 197.35000000000002L1867 202.25L1871.5 197.35000000000002" stroke="#303030" stroke-width="2.95" fill="none" stroke-linecap="round" stroke-linejoin="miter"/>
<rect x="1740.1" y="232.3" width="29.8" height="25.6" rx="0" fill="#fafafa" stroke="none" stroke-width="0" />
<path d="M1743.4 232.3H1740.1V257.9H1769.9V232.3H1766.6" stroke="#333" stroke-width="2" fill="none"/>
<path d="M1748 235V257.9M1762 235V257.9M1740.1 240H1769.9M1740.1 249.8H1769.9" stroke="#6a6a6a" stroke-width="1.8" fill="none"/>
<rect x="1748.2" y="240.2" width="13.6" height="9.6" rx="0" fill="#90bdea" stroke="#1f5db4" stroke-width="2" />
<path d="M1745.6 230H1764.4M1746 227.4V232.7M1764 227.4V232.7" stroke="#3f88d0" stroke-width="2" fill="none"/>
<path d="M1868.5 241.35000000000002L1873 246.25L1877.5 241.35000000000002" stroke="#303030" stroke-width="2.95" fill="none" stroke-linecap="round" stroke-linejoin="miter"/>
<path d="M1955.4 178.8L1934.2 199.8" stroke="#3a3a3a" stroke-width="2.3" fill="none" stroke-linecap="round" stroke-linejoin="round" />
<circle cx="1970" cy="164.2" r="20.2" fill="#fafafa" stroke="#3a3a3a" stroke-width="2.2"/>
<path d="M2006.5 169.25L2011 174.14999999999998L2015.5 169.25" stroke="#303030" stroke-width="2.95" fill="none" stroke-linecap="round" stroke-linejoin="miter"/>
<rect x="2078.2" y="140.2" width="61.2" height="61.4" rx="0" fill="#fafafa" stroke="#3a3a3a" stroke-width="2.6" />
<rect x="2079.5" y="141.5" width="58.6" height="7.4" rx="0" fill="#c9c9c9" stroke="none" stroke-width="0" />
<path d="M2078.2 150H2139.4" stroke="#3a3a3a" stroke-width="2.2" fill="none" stroke-linecap="round" stroke-linejoin="round" />
<path d="M2078.2 166.6H2139.4M2078.2 184.4H2139.4M2098.6 150V201.6M2119 150V201.6" stroke="#8a8a8a" stroke-width="2" fill="none"/>
<path d="M2120.4 180.4L2138.6 200.8" stroke="#3a3a3a" stroke-width="3.2" fill="none" stroke-linecap="round" stroke-linejoin="round" />
<circle cx="2106.4" cy="166.2" r="19.4" fill="#fafafa" stroke="#3a3a3a" stroke-width="2.6"/>
<rect x="2096" y="162.8" width="7" height="12" rx="0" fill="#cfcfcf" stroke="#8a8a8a" stroke-width="1.6" />
<rect x="2103" y="153.9" width="7.6" height="20.9" rx="0" fill="#fafafa" stroke="#3a3a3a" stroke-width="1.8" />
<rect x="2110.6" y="158" width="7.2" height="16.8" rx="0" fill="#8fbcea" stroke="#2f6ec2" stroke-width="1.8" />
<path d="M150 294.9H164L157 284.4Z" fill="#6a6a6a" />
<path d="M150 307.2H164L157 317.6Z" fill="#6a6a6a" />
<path d="M206.2 293.3L223.6 310.9M223.6 293.3L206.2 310.9" stroke="#d1d1d1" stroke-width="3.9" fill="none" stroke-linecap="round"/>
<path d="M262 303.6L270.6 311L286 293" stroke="#d1d1d1" stroke-width="3.9" fill="none" stroke-linecap="round"/>
<rect x="364" y="287" width="1.6" height="29.6" rx="0" fill="#d6d6d6" stroke="none" stroke-width="0" />
<path d="M2184 295.8H2197.7L2190.8 307Z" fill="#6a6a6a" />
<path d="M47.9 1554V1574.3L33.8 1564.2Z" fill="#bcbcbc" />
<path d="M80.2 1554V1574.3L94.2 1564.2Z" fill="#b2b2b2" />
<rect x="124" y="1539" width="2" height="40.4" rx="0" fill="#d0d0d0" stroke="none" stroke-width="0" />
<rect x="488.2" y="1539" width="2" height="40.4" rx="0" fill="#d0d0d0" stroke="none" stroke-width="0" />
<rect x="1554" y="1539" width="2" height="40.4" rx="0" fill="#d0d0d0" stroke="none" stroke-width="0" />
<rect x="1815.8" y="1539" width="2" height="40.4" rx="0" fill="#d0d0d0" stroke="none" stroke-width="0" />
<rect x="1892" y="1539" width="2" height="40.4" rx="0" fill="#d0d0d0" stroke="none" stroke-width="0" />
<path d="M1845.6 1562.6H1865.8M1855.7 1552.6V1572.6" stroke="#505050" stroke-width="3.2" fill="none"/>
<circle cx="169.2" cy="1602.2" r="4.2" fill="#636363" stroke="none" stroke-width="0"/>
<path d="M176 1601.6H192.4M188 1601.6V1617.4a4.4 4.4 0 0 1-4.4 4.4H165.6M172 1609.4V1620.6" stroke="#636363" stroke-width="3" fill="none" stroke-linecap="round" stroke-linejoin="round" />
<path d="M1593.2 1600.3H1616.8V1623.9H1593.2ZM1593.2 1608.1H1616.8M1593.2 1616.1H1616.8M1601.2 1600.3V1623.9M1609.1 1600.3V1623.9" stroke="#fff" stroke-width="2.3" fill="none" stroke-linejoin="round"/>
<path d="M1664.2 1600.2H1689.6V1623.7H1664.2ZM1670.2 1604.2H1683.7V1619.7H1670.2ZM1673.2 1608H1681M1673.2 1612H1681M1673.2 1616H1681" stroke="#5a5a5a" stroke-width="2" fill="none" stroke-linejoin="round"/>
<path d="M1735.3 1600.2H1760.7V1623.7H1735.3ZM1735.3 1614.1H1751.2V1600.2M1743 1600.2V1614.1" stroke="#5a5a5a" stroke-width="2" fill="none" stroke-linejoin="round"/>
<path d="M1799.9 1611.9H1816.2M2044 1611.9H2060M2052 1603.9V1619.9" stroke="#555" stroke-width="3.2" fill="none"/>
<rect x="1829.6" y="1608" width="200.1" height="8.6" rx="4.3" fill="#a6a6a6" stroke="none" stroke-width="0" />
<defs><linearGradient id="kn" x1="0" y1="0" x2="0" y2="1"><stop offset="0" stop-color="#ffffff"/><stop offset="1" stop-color="#e2e2e2"/></linearGradient></defs>
<circle cx="1920.5" cy="1612.6" r="16.6" fill="rgba(0,0,0,.14)" stroke="none" stroke-width="0"/>
<circle cx="1920.5" cy="1611.9" r="16" fill="url(#kn)" stroke="#c4c4c4" stroke-width="1"/>
<text xml:space="preserve" transform="matrix(0.9444 0 0 1 52.70 398.5)" font-size="17.5" fill="#000" font-weight="bold">2</text>
<text xml:space="preserve" transform="matrix(0.9597 0 0 1 110.20 398.5)" font-size="17.5" fill="#2e74b5" font-weight="bold" font-style="italic">(14 pts)</text>
<text xml:space="preserve" transform="matrix(0.9910 0 0 1 177.41 398.5)" font-size="17.5" fill="#000" stroke="#000" stroke-width="0.3">Based upon your financial forecast for the years 2023 - 2027, compute 2a through 2d below FROM THE VIEWPOINT OF THE SHARK,</text>
<text xml:space="preserve" transform="matrix(1.0211 0 0 1 109.48 426.3)" font-size="17.5" fill="#000" stroke="#000" stroke-width="0.3">placing your final results in the yellow highlighted area.</text>
<text xml:space="preserve" transform="matrix(0.9954 0 0 1 206.50 454.3)" font-size="17.5" fill="#000" font-style="italic" stroke="#000" stroke-width="0.3">(HINT:  See Week 6 Lesson for 2b - 2d.  No hint for 2a!)</text>
<text xml:space="preserve" transform="matrix(0.9949 0 0 1 206.50 510.6)" font-size="17.5" fill="#000" font-weight="bold">GIVEN:</text>
<text xml:space="preserve" transform="matrix(1.0101 0 0 1 205.79 538.7)" font-size="17.5" fill="#000" stroke="#000" stroke-width="0.3">NOTE 1:  The shark's investment of $1,000,000 gave him 25% ownership of your company and its profits.</text>
<text xml:space="preserve" transform="matrix(0.9891 0 0 1 205.81 566.4)" font-size="17.5" fill="#000" stroke="#000" stroke-width="0.3">NOTE 2:  The shark requires a 9% Rate of Return on his investment.</text>
<text xml:space="preserve" transform="matrix(0.9742 0 0 1 205.83 621)" font-size="17.5" fill="#000" stroke="#000" stroke-width="0.3">NOTE 3:</text>
<text xml:space="preserve" transform="matrix(0.9949 0 0 1 762.40 621.1)" font-size="17.5" fill="#000" font-weight="bold">2023</text>
<text xml:space="preserve" transform="matrix(0.9949 0 0 1 888.30 621.1)" font-size="17.5" fill="#000" font-weight="bold">2024</text>
<text xml:space="preserve" transform="matrix(1.0000 0 0 1 1010.00 621.1)" font-size="17.5" fill="#000" font-weight="bold">2025</text>
<text xml:space="preserve" transform="matrix(1.0026 0 0 1 1122.40 621.1)" font-size="17.5" fill="#000" font-weight="bold">2026</text>
<text xml:space="preserve" transform="matrix(1.0103 0 0 1 1234.00 621.1)" font-size="17.5" fill="#000" font-weight="bold">2027</text>
<text xml:space="preserve" transform="matrix(0.9949 0 0 1 762.40 769.3)" font-size="17.5" fill="#000" font-weight="bold">2023</text>
<text xml:space="preserve" transform="matrix(0.9949 0 0 1 888.30 769.3)" font-size="17.5" fill="#000" font-weight="bold">2024</text>
<text xml:space="preserve" transform="matrix(1.0000 0 0 1 1010.00 769.3)" font-size="17.5" fill="#000" font-weight="bold">2025</text>
<text xml:space="preserve" transform="matrix(1.0026 0 0 1 1122.40 769.3)" font-size="17.5" fill="#000" font-weight="bold">2026</text>
<text xml:space="preserve" transform="matrix(1.0103 0 0 1 1234.00 769.3)" font-size="17.5" fill="#000" font-weight="bold">2027</text>
<text xml:space="preserve" transform="matrix(0.9949 0 0 1 762.40 1066.5)" font-size="17.5" fill="#000" font-weight="bold">2023</text>
<text xml:space="preserve" transform="matrix(0.9949 0 0 1 888.30 1066.5)" font-size="17.5" fill="#000" font-weight="bold">2024</text>
<text xml:space="preserve" transform="matrix(1.0000 0 0 1 1010.00 1066.5)" font-size="17.5" fill="#000" font-weight="bold">2025</text>
<text xml:space="preserve" transform="matrix(1.0026 0 0 1 1122.40 1066.5)" font-size="17.5" fill="#000" font-weight="bold">2026</text>
<text xml:space="preserve" transform="matrix(1.0103 0 0 1 1234.00 1066.5)" font-size="17.5" fill="#000" font-weight="bold">2027</text>
<text xml:space="preserve" transform="matrix(0.9949 0 0 1 762.40 1432.5)" font-size="17.5" fill="#000" font-weight="bold">2023</text>
<text xml:space="preserve" transform="matrix(0.9949 0 0 1 888.30 1432.5)" font-size="17.5" fill="#000" font-weight="bold">2024</text>
<text xml:space="preserve" transform="matrix(1.0000 0 0 1 1010.00 1432.5)" font-size="17.5" fill="#000" font-weight="bold">2025</text>
<text xml:space="preserve" transform="matrix(1.0026 0 0 1 1122.40 1432.5)" font-size="17.5" fill="#000" font-weight="bold">2026</text>
<text xml:space="preserve" transform="matrix(1.0103 0 0 1 1234.00 1432.5)" font-size="17.5" fill="#000" font-weight="bold">2027</text>
<text xml:space="preserve" transform="matrix(0.9919 0 0 1 206.80 651)" font-size="17.5" fill="#000" stroke="#000" stroke-width="0.3">Cash Flows from Operations</text>
<text xml:space="preserve" transform="matrix(1.0473 0 0 1 205.75 679.7)" font-size="17.5" fill="#000" stroke="#000" stroke-width="0.3">(Total for company)</text>
<text xml:space="preserve" transform="matrix(1.0071 0 0 1 617.49 682.9)" font-size="17.5" fill="#000" stroke="#000" stroke-width="0.3">($1,000,000)</text>
<text xml:space="preserve" transform="matrix(1.0014 0 0 1 756.20 682.9)" font-size="17.5" fill="#000" stroke="#000" stroke-width="0.3">$372,212</text>
<text xml:space="preserve" transform="matrix(1.0014 0 0 1 888.30 682.9)" font-size="17.5" fill="#000" stroke="#000" stroke-width="0.3">$843,095</text>
<text xml:space="preserve" transform="matrix(1.0011 0 0 1 986.10 682.9)" font-size="17.5" fill="#000" stroke="#000" stroke-width="0.3">$1,066,542</text>
<text xml:space="preserve" transform="matrix(1.0011 0 0 1 1098.30 682.9)" font-size="17.5" fill="#000" stroke="#000" stroke-width="0.3">$1,330,902</text>
<text xml:space="preserve" transform="matrix(1.0011 0 0 1 1210.10 682.9)" font-size="17.5" fill="#000" stroke="#000" stroke-width="0.3">$1,554,349</text>
<text xml:space="preserve" transform="matrix(0.9510 0 0 1 206.40 768.8)" font-size="17.5" fill="#000" font-weight="bold">SOLVE FOR:</text>
<text xml:space="preserve" transform="matrix(0.9937 0 0 1 206.60 798.9)" font-size="17.5" fill="#000" stroke="#000" stroke-width="0.3">Cash Flows from Operations</text>
<text xml:space="preserve" transform="matrix(1.0256 0 0 1 205.77 826.8)" font-size="17.5" fill="#000" stroke="#000" stroke-width="0.3">(shark only)</text>
<text xml:space="preserve" transform="matrix(0.9000 0 0 1 148.30 814.8)" font-size="17.5" fill="#000" font-weight="bold">a</text>
<text xml:space="preserve" transform="matrix(0.9737 0 0 1 478.00 830.8)" font-size="17.5" fill="#000" font-style="italic" stroke="#000" stroke-width="0.3">3 pts</text>
<text xml:space="preserve" transform="matrix(1.0107 0 0 1 205.39 862.7)" font-size="17.5" fill="#000" stroke="#000" stroke-width="0.3">Payback (in years) of the shark's</text>
<text xml:space="preserve" transform="matrix(1.0621 0 0 1 206.80 890.6)" font-size="17.5" fill="#000" stroke="#000" stroke-width="0.3">$1M investment</text>
<text xml:space="preserve" transform="matrix(0.9921 0 0 1 365.81 890.6)" font-size="17.5" fill="#000" stroke="#000" stroke-width="0.3">(x.xx years)</text>
<text xml:space="preserve" transform="matrix(1.0778 0 0 1 147.22 876.6)" font-size="17.5" fill="#000" font-weight="bold">b</text>
<text xml:space="preserve" transform="matrix(0.9737 0 0 1 478.00 892.6)" font-size="17.5" fill="#000" font-style="italic" stroke="#000" stroke-width="0.3">3 pts</text>
<text xml:space="preserve" transform="matrix(0.8889 0 0 1 150.00 922.5)" font-size="17.5" fill="#000" font-weight="bold">c</text>
<text xml:space="preserve" transform="matrix(1.0071 0 0 1 205.79 922.5)" font-size="17.5" fill="#000" stroke="#000" stroke-width="0.3">IRR of shark's investment</text>
<text xml:space="preserve" transform="matrix(0.9737 0 0 1 478.00 922.5)" font-size="17.5" fill="#000" font-style="italic" stroke="#000" stroke-width="0.3">4 pts</text>
<text xml:space="preserve" transform="matrix(0.9700 0 0 1 148.30 952.4)" font-size="17.5" fill="#000" font-weight="bold">d</text>
<text xml:space="preserve" transform="matrix(1.0167 0 0 1 205.78 952.4)" font-size="17.5" fill="#000" stroke="#000" stroke-width="0.3">NPV of shark's investment</text>
<text xml:space="preserve" transform="matrix(0.9737 0 0 1 478.00 952.4)" font-size="17.5" fill="#000" font-style="italic" stroke="#000" stroke-width="0.3">4 pts</text>
<text xml:space="preserve" transform="matrix(0.9444 0 0 1 52.70 1038.3)" font-size="17.5" fill="#000" font-weight="bold">3</text>
<text xml:space="preserve" transform="matrix(0.9481 0 0 1 110.50 1038.3)" font-size="17.5" fill="#2e74b5" font-weight="bold" font-style="italic">(3 pts)</text>
<text xml:space="preserve" transform="matrix(1.0159 0 0 1 169.40 1038.3)" font-size="17.5" fill="#000" stroke="#000" stroke-width="0.3">What is the growth rate of Net Income for each of the forecasted years?</text>
<text xml:space="preserve" transform="matrix(0.9893 0 0 1 206.80 1066.5)" font-size="17.5" fill="#000" font-style="italic" stroke="#000" stroke-width="0.3">(HINT:  See Week 2 Lesson, horizontal analysis)</text>
<text xml:space="preserve" transform="matrix(0.9500 0 0 1 52.20 1210.4)" font-size="17.5" fill="#000" font-weight="bold">4</text>
<text xml:space="preserve" transform="matrix(0.9481 0 0 1 110.50 1210.4)" font-size="17.5" fill="#2e74b5" font-weight="bold" font-style="italic">(4 pts)</text>
<text xml:space="preserve" transform="matrix(1.0202 0 0 1 168.80 1210.4)" font-size="17.5" fill="#000" stroke="#000" stroke-width="0.3">Compute the following for the forecasted years.</text>
<text xml:space="preserve" transform="matrix(0.9811 0 0 1 546.92 1210.4)" font-size="17.5" fill="#000" font-weight="bold">(Total company)</text>
<text xml:space="preserve" transform="matrix(0.9951 0 0 1 206.80 1238.9)" font-size="17.5" fill="#000" font-style="italic" stroke="#000" stroke-width="0.3">(HINT:  See Week 1 Chapter readings for FCF formula)</text>
<text xml:space="preserve" transform="matrix(0.9949 0 0 1 206.50 1294.8)" font-size="17.5" fill="#000" font-weight="bold">GIVEN:</text>
<text xml:space="preserve" transform="matrix(1.0051 0 0 1 205.79 1322.6)" font-size="17.5" fill="#000" stroke="#000" stroke-width="0.3">NOTE 1:  Dividends are zero every year.</text>
<text xml:space="preserve" transform="matrix(1.0003 0 0 1 205.80 1350.5)" font-size="17.5" fill="#000" stroke="#000" stroke-width="0.3">NOTE 2:  $750,000 of the $1M invested by the shark was spent on Capital Expenditures in 2023.  No other capital expeditures occurred.</text>
<text xml:space="preserve" transform="matrix(0.9510 0 0 1 206.40 1432.5)" font-size="17.5" fill="#000" font-weight="bold">SOLVE FOR:</text>
<text xml:space="preserve" transform="matrix(0.8100 0 0 1 148.60 1462.5)" font-size="17.5" fill="#000" font-weight="bold">a</text>
<text xml:space="preserve" transform="matrix(0.9650 0 0 1 205.93 1462.5)" font-size="17.5" fill="#000" stroke="#000" stroke-width="0.3">Free Cash Flow</text>
<text xml:space="preserve" transform="matrix(0.9658 0 0 1 478.60 1462.5)" font-size="17.5" fill="#000" font-style="italic" stroke="#000" stroke-width="0.3">3 pts</text>
<text xml:space="preserve" transform="matrix(1.0333 0 0 1 147.57 1492.5)" font-size="17.5" fill="#000" font-weight="bold">b</text>
<text xml:space="preserve" transform="matrix(0.9741 0 0 1 205.93 1492.5)" font-size="17.5" fill="#000" stroke="#000" stroke-width="0.3">Free Cash Flow per share</text>
<text xml:space="preserve" transform="matrix(0.9800 0 0 1 478.60 1492.5)" font-size="17.5" fill="#000" font-style="italic" stroke="#000" stroke-width="0.3">1 pt</text>
<text xml:space="preserve" transform="matrix(0.9526 0 0 1 14.90 398.6)" font-size="17.6" fill="#606060" stroke="#606060" stroke-width="0.25">28</text>
<text xml:space="preserve" transform="matrix(0.9526 0 0 1 14.90 426.5)" font-size="17.6" fill="#606060" stroke="#606060" stroke-width="0.25">29</text>
<text xml:space="preserve" transform="matrix(0.9526 0 0 1 14.90 454.5)" font-size="17.6" fill="#606060" stroke="#606060" stroke-width="0.25">30</text>
<text xml:space="preserve" transform="matrix(0.9526 0 0 1 14.90 482.5)" font-size="17.6" fill="#606060" stroke="#606060" stroke-width="0.25">31</text>
<text xml:space="preserve" transform="matrix(0.9526 0 0 1 14.90 510.5)" font-size="17.6" fill="#606060" stroke="#606060" stroke-width="0.25">32</text>
<text xml:space="preserve" transform="matrix(0.9526 0 0 1 14.90 538.5)" font-size="17.6" fill="#606060" stroke="#606060" stroke-width="0.25">33</text>
<text xml:space="preserve" transform="matrix(0.9050 0 0 1 14.90 566.5)" font-size="17.6" fill="#606060" stroke="#606060" stroke-width="0.25">34</text>
<text xml:space="preserve" transform="matrix(0.9526 0 0 1 14.90 594.5)" font-size="17.6" fill="#606060" stroke="#606060" stroke-width="0.25">35</text>
<text xml:space="preserve" transform="matrix(0.9526 0 0 1 14.90 621)" font-size="17.6" fill="#606060" stroke="#606060" stroke-width="0.25">36</text>
<text xml:space="preserve" transform="matrix(0.9526 0 0 1 14.90 682.7)" font-size="17.6" fill="#606060" stroke="#606060" stroke-width="0.25">37</text>
<text xml:space="preserve" transform="matrix(0.9526 0 0 1 14.90 712.5)" font-size="17.6" fill="#606060" stroke="#606060" stroke-width="0.25">38</text>
<text xml:space="preserve" transform="matrix(0.9526 0 0 1 14.90 740.5)" font-size="17.6" fill="#606060" stroke="#606060" stroke-width="0.25">39</text>
<text xml:space="preserve" transform="matrix(0.9526 0 0 1 14.90 768.8)" font-size="17.6" fill="#606060" stroke="#606060" stroke-width="0.25">40</text>
<text xml:space="preserve" transform="matrix(0.9526 0 0 1 14.90 830.8)" font-size="17.6" fill="#606060" stroke="#606060" stroke-width="0.25">41</text>
<text xml:space="preserve" transform="matrix(0.9526 0 0 1 14.90 892.6)" font-size="17.6" fill="#606060" stroke="#606060" stroke-width="0.25">42</text>
<text xml:space="preserve" transform="matrix(0.9526 0 0 1 14.90 922.5)" font-size="17.6" fill="#606060" stroke="#606060" stroke-width="0.25">43</text>
<text xml:space="preserve" transform="matrix(0.9050 0 0 1 14.90 952.4)" font-size="17.6" fill="#606060" stroke="#606060" stroke-width="0.25">44</text>
<text xml:space="preserve" transform="matrix(0.9526 0 0 1 14.90 982.5)" font-size="17.6" fill="#606060" stroke="#606060" stroke-width="0.25">45</text>
<text xml:space="preserve" transform="matrix(0.9526 0 0 1 14.90 1010.5)" font-size="17.6" fill="#606060" stroke="#606060" stroke-width="0.25">46</text>
<text xml:space="preserve" transform="matrix(0.9526 0 0 1 14.90 1038.5)" font-size="17.6" fill="#606060" stroke="#606060" stroke-width="0.25">47</text>
<text xml:space="preserve" transform="matrix(0.9526 0 0 1 14.90 1066.5)" font-size="17.6" fill="#606060" stroke="#606060" stroke-width="0.25">48</text>
<text xml:space="preserve" transform="matrix(0.9526 0 0 1 14.90 1096.5)" font-size="17.6" fill="#606060" stroke="#606060" stroke-width="0.25">49</text>
<text xml:space="preserve" transform="matrix(0.9526 0 0 1 14.90 1126.5)" font-size="17.6" fill="#606060" stroke="#606060" stroke-width="0.25">50</text>
<text xml:space="preserve" transform="matrix(0.9526 0 0 1 14.90 1154.5)" font-size="17.6" fill="#606060" stroke="#606060" stroke-width="0.25">51</text>
<text xml:space="preserve" transform="matrix(0.9526 0 0 1 14.90 1182.5)" font-size="17.6" fill="#606060" stroke="#606060" stroke-width="0.25">52</text>
<text xml:space="preserve" transform="matrix(0.9526 0 0 1 14.90 1210.5)" font-size="17.6" fill="#606060" stroke="#606060" stroke-width="0.25">53</text>
<text xml:space="preserve" transform="matrix(0.9050 0 0 1 14.90 1238.5)" font-size="17.6" fill="#606060" stroke="#606060" stroke-width="0.25">54</text>
<text xml:space="preserve" transform="matrix(0.9526 0 0 1 14.90 1266.5)" font-size="17.6" fill="#606060" stroke="#606060" stroke-width="0.25">55</text>
<text xml:space="preserve" transform="matrix(0.9526 0 0 1 14.90 1294.5)" font-size="17.6" fill="#606060" stroke="#606060" stroke-width="0.25">56</text>
<text xml:space="preserve" transform="matrix(0.9526 0 0 1 14.90 1322.5)" font-size="17.6" fill="#606060" stroke="#606060" stroke-width="0.25">57</text>
<text xml:space="preserve" transform="matrix(0.9526 0 0 1 14.90 1350.5)" font-size="17.6" fill="#606060" stroke="#606060" stroke-width="0.25">58</text>
<text xml:space="preserve" transform="matrix(0.9526 0 0 1 14.90 1378.5)" font-size="17.6" fill="#606060" stroke="#606060" stroke-width="0.25">59</text>
<text xml:space="preserve" transform="matrix(0.9526 0 0 1 14.90 1406.5)" font-size="17.6" fill="#606060" stroke="#606060" stroke-width="0.25">60</text>
<text xml:space="preserve" transform="matrix(0.9526 0 0 1 14.90 1432.5)" font-size="17.6" fill="#606060" stroke="#606060" stroke-width="0.25">61</text>
<text xml:space="preserve" transform="matrix(0.9526 0 0 1 14.90 1462.5)" font-size="17.6" fill="#606060" stroke="#606060" stroke-width="0.25">62</text>
<text xml:space="preserve" transform="matrix(0.9526 0 0 1 14.90 1492.5)" font-size="17.6" fill="#606060" stroke="#606060" stroke-width="0.25">63</text>
<text xml:space="preserve" transform="matrix(0.9050 0 0 1 14.90 1522.5)" font-size="17.6" fill="#606060" stroke="#606060" stroke-width="0.25">64</text>
<text xml:space="preserve" transform="matrix(1.0000 0 0 1 188.60 41.4)" font-size="23" fill="#dbe8de" font-weight="bold" letter-spacing="-0.871">AutoSave</text>
<text xml:space="preserve" transform="matrix(1.0000 0 0 1 332.80 37.7)" font-size="15" fill="#e8f0ea" font-weight="bold" letter-spacing="0.4">OFF</text>
<text xml:space="preserve" transform="matrix(1.0000 0 0 1 799.00 42.8)" font-size="26" fill="#e2ece4" font-weight="bold" letter-spacing="0.66">BUSN278 Course Project Milestone 3 TEMPLATE_2023</text>
<text xml:space="preserve" transform="matrix(1.0000 0 0 1 26.20 103.2)" font-size="26" fill="#262626" font-weight="bold" letter-spacing="1.033">Home</text>
<text xml:space="preserve" transform="matrix(1.0021 0 0 1 147.00 102.8)" font-size="26" fill="#262626" letter-spacing="1.17" stroke="#262626" stroke-width="0.7">Insert</text>
<text xml:space="preserve" transform="matrix(1.0000 0 0 1 270.40 102.8)" font-size="26" fill="#262626" letter-spacing="0.133" stroke="#262626" stroke-width="0.7">Draw</text>
<text xml:space="preserve" transform="matrix(1.0000 0 0 1 382.60 102.8)" font-size="26" fill="#262626" letter-spacing="0.44" stroke="#262626" stroke-width="0.7">Page Layout</text>
<text xml:space="preserve" transform="matrix(1.0000 0 0 1 586.50 102.8)" font-size="26" fill="#262626" letter-spacing="0.743" stroke="#262626" stroke-width="0.7">Formulas</text>
<text xml:space="preserve" transform="matrix(1.0000 0 0 1 752.30 102.8)" font-size="26" fill="#262626" letter-spacing="0.067" stroke="#262626" stroke-width="0.7">Data</text>
<text xml:space="preserve" transform="matrix(1.0000 0 0 1 856.60 102.8)" font-size="26" fill="#262626" letter-spacing="0.26" stroke="#262626" stroke-width="0.7">Review</text>
<text xml:space="preserve" transform="matrix(1.0000 0 0 1 993.30 102.8)" font-size="26" fill="#262626" letter-spacing="0.567" stroke="#262626" stroke-width="0.7">View</text>
<text xml:space="preserve" transform="matrix(1.0000 0 0 1 1103.00 102.8)" font-size="26" fill="#262626" letter-spacing="0.725" stroke="#262626" stroke-width="0.7">Developer</text>
<text xml:space="preserve" transform="matrix(1.0000 0 0 1 1307.00 102.8)" font-size="26" fill="#262626" letter-spacing="0.55" stroke="#262626" stroke-width="0.7">Tell me</text>
<text xml:space="preserve" transform="matrix(1.0000 0 0 1 1893.00 106.6)" font-size="23.5" fill="#2f7045" font-weight="bold" letter-spacing="0.55">Share</text>
<text xml:space="preserve" transform="matrix(1.0000 0 0 1 2045.90 106.6)" font-size="23.5" fill="#2f7045" font-weight="bold" letter-spacing="0.729">Comments</text>
<text xml:space="preserve" transform="matrix(1.0075 0 0 1 43.99 230.4)" font-size="20" fill="#0c0c0c" letter-spacing="0.9">Paste</text>
<text xml:space="preserve" transform="matrix(1.0000 0 0 1 246.00 175.2)" font-size="24" fill="#000" letter-spacing="0.692">Calibri (Body)</text>
<text xml:space="preserve" transform="matrix(0.9369 0 0 1 530.83 175.2)" font-size="24" fill="#000" letter-spacing="-1.08">11</text>
<text xml:space="preserve" transform="matrix(0.8588 0 0 1 249.28 238)" font-size="27.5" fill="#2b2b2b" font-weight="bold">B</text>
<text xml:space="preserve" transform="matrix(1.2091 0 0 1 303.70 238)" font-size="28" fill="#2b2b2b" font-style="italic" font-family='"Liberation Serif", serif'>I</text>
<text xml:space="preserve" transform="matrix(1.1250 0 0 1 349.75 238)" font-size="27" fill="#2b2b2b">U</text>
<text xml:space="preserve" transform="matrix(0.6810 0 0 1 1043.70 244.8)" font-size="38.5" fill="#333">$</text>
<text xml:space="preserve" transform="matrix(0.8879 0 0 1 1112.11 245.7)" font-size="39.5" fill="#333">%</text>
<text xml:space="preserve" transform="matrix(0.8423 0 0 1 642.00 176.8)" font-size="39" fill="#333">A</text>
<text xml:space="preserve" transform="matrix(0.8950 0 0 1 696.90 176.8)" font-size="30" fill="#333">A</text>
<text xml:space="preserve" transform="matrix(0.8545 0 0 1 641.10 236.8)" font-size="33" fill="#333">A</text>
<text xml:space="preserve" transform="matrix(1.0000 0 0 1 1039.80 175.2)" font-size="24" fill="#000" letter-spacing="0.45">General</text>
<text xml:space="preserve" transform="matrix(1.0468 0 0 1 1429.85 162.3)" font-size="20" fill="#0c0c0c" letter-spacing="0.9">Conditional Formatting</text>
<text xml:space="preserve" transform="matrix(1.0226 0 0 1 1429.88 206.6)" font-size="20" fill="#0c0c0c" letter-spacing="0.9">Format as Table</text>
<text xml:space="preserve" transform="matrix(1.0206 0 0 1 1429.88 251)" font-size="20" fill="#0c0c0c" letter-spacing="0.9">Cell Styles</text>
<text xml:space="preserve" transform="matrix(1.0590 0 0 1 1781.58 162.3)" font-size="20" fill="#0c0c0c" letter-spacing="0.9">Insert</text>
<text xml:space="preserve" transform="matrix(1.0380 0 0 1 1782.66 206.6)" font-size="20" fill="#0c0c0c" letter-spacing="0.9">Delete</text>
<text xml:space="preserve" transform="matrix(1.0207 0 0 1 1782.68 251)" font-size="20" fill="#0c0c0c" letter-spacing="0.9">Format</text>
<text xml:space="preserve" transform="matrix(1.0559 0 0 1 1938.74 230.8)" font-size="20" fill="#0c0c0c" letter-spacing="0.9">Editing</text>
<text xml:space="preserve" transform="matrix(1.0092 0 0 1 2069.70 230.8)" font-size="20" fill="#0c0c0c" letter-spacing="0.9">Analyze</text>
<text xml:space="preserve" transform="matrix(1.0000 0 0 1 2085.50 254.2)" font-size="20" fill="#0c0c0c" letter-spacing="0.833">Data</text>
<text xml:space="preserve" transform="matrix(1.0000 0 0 1 22.80 308.9)" font-size="25" fill="#222" letter-spacing="-0.3">P20</text>
<text xml:space="preserve" transform="matrix(1.1200 0 0 1 320.00 311)" font-size="34" fill="#444" font-style="italic" font-family='"Liberation Serif", serif' stroke="#444" stroke-width="0.5">fx</text>
<text xml:space="preserve" transform="matrix(1.0000 0 0 1 166.00 1570.4)" font-size="23" fill="#5a5a5a" letter-spacing="0.85" stroke="#5a5a5a" stroke-width="0.6">Scenario &amp; Requirements</text>
<text xml:space="preserve" transform="matrix(1.0000 0 0 1 533.00 1570.4)" font-size="23" fill="#5a5a5a" letter-spacing="0.923" stroke="#5a5a5a" stroke-width="0.6">Milestone 3 Financial Stmt data</text>
<text xml:space="preserve" transform="matrix(1.0000 0 0 1 965.00 1570.4)" font-size="23" fill="#3a8350" font-weight="bold" letter-spacing="0.711">Milestone 3 Metrics</text>
<text xml:space="preserve" transform="matrix(1.0000 0 0 1 1267.90 1570.4)" font-size="23" fill="#5a5a5a" letter-spacing="0.975" stroke="#5a5a5a" stroke-width="0.6">Milestone 3 Questions</text>
<text xml:space="preserve" transform="matrix(1.0000 0 0 1 1591.80 1570.4)" font-size="23" fill="#5a5a5a" letter-spacing="0.862" stroke="#5a5a5a" stroke-width="0.6">Grading RUBRIC</text>
<text xml:space="preserve" transform="matrix(1.0051 0 0 1 52.89 1619.8)" font-size="22" fill="#555" letter-spacing="0.99" stroke="#555" stroke-width="0.4">Ready</text>
<text xml:space="preserve" transform="matrix(1.1027 0 0 1 2099.90 1620.8)" font-size="22" fill="#555" letter-spacing="0.99" stroke="#555" stroke-width="0.4">90%</text>
<text transform="translate(57.7 358.8) scale(.9 1)" font-size="18.5" text-anchor="middle" fill="#555" stroke="#555" stroke-width=".35">A</text>
<text transform="translate(153 358.8) scale(.9 1)" font-size="18.5" text-anchor="middle" fill="#555" stroke="#555" stroke-width=".35">B</text>
<text transform="translate(337 358.8) scale(.9 1)" font-size="18.5" text-anchor="middle" fill="#555" stroke="#555" stroke-width=".35">C</text>
<text transform="translate(521 358.8) scale(.9 1)" font-size="18.5" text-anchor="middle" fill="#555" stroke="#555" stroke-width=".35">D</text>
<text transform="translate(646 358.8) scale(.9 1)" font-size="18.5" text-anchor="middle" fill="#555" stroke="#555" stroke-width=".35">E</text>
<text transform="translate(782 358.8) scale(.9 1)" font-size="18.5" text-anchor="middle" fill="#555" stroke="#555" stroke-width=".35">F</text>
<text transform="translate(907 358.8) scale(.9 1)" font-size="18.5" text-anchor="middle" fill="#555" stroke="#555" stroke-width=".35">G</text>
<text transform="translate(1029 358.8) scale(.9 1)" font-size="18.5" text-anchor="middle" fill="#555" stroke="#555" stroke-width=".35">H</text>
<text transform="translate(1141 358.8) scale(.9 1)" font-size="18.5" text-anchor="middle" fill="#555" stroke="#555" stroke-width=".35">I</text>
<text transform="translate(1253 358.8) scale(.9 1)" font-size="18.5" text-anchor="middle" fill="#555" stroke="#555" stroke-width=".35">J</text>
<text transform="translate(1357 358.8) scale(.9 1)" font-size="18.5" text-anchor="middle" fill="#555" stroke="#555" stroke-width=".35">K</text>
<text transform="translate(1453 358.8) scale(.9 1)" font-size="18.5" text-anchor="middle" fill="#555" stroke="#555" stroke-width=".35">L</text>
<text transform="translate(1549 358.8) scale(.9 1)" font-size="18.5" text-anchor="middle" fill="#555" stroke="#555" stroke-width=".35">M</text>
<text transform="translate(1645 358.8) scale(.9 1)" font-size="18.5" text-anchor="middle" fill="#555" stroke="#555" stroke-width=".35">N</text>
<text transform="translate(1741 358.8) scale(.9 1)" font-size="18.5" text-anchor="middle" fill="#555" stroke="#555" stroke-width=".35">O</text>
<text transform="translate(1837 358.8) scale(.9 1)" font-size="18.5" text-anchor="middle" fill="#2e7a45" stroke="#2e7a45" stroke-width=".35">P</text>
<text transform="translate(1933 358.8) scale(.9 1)" font-size="18.5" text-anchor="middle" fill="#555" stroke="#555" stroke-width=".35">Q</text>
<text transform="translate(2029 358.8) scale(.9 1)" font-size="18.5" text-anchor="middle" fill="#555" stroke="#555" stroke-width=".35">R</text>
<text transform="translate(2125 358.8) scale(.9 1)" font-size="18.5" text-anchor="middle" fill="#555" stroke="#555" stroke-width=".35">S</text>
</svg></body></html>
